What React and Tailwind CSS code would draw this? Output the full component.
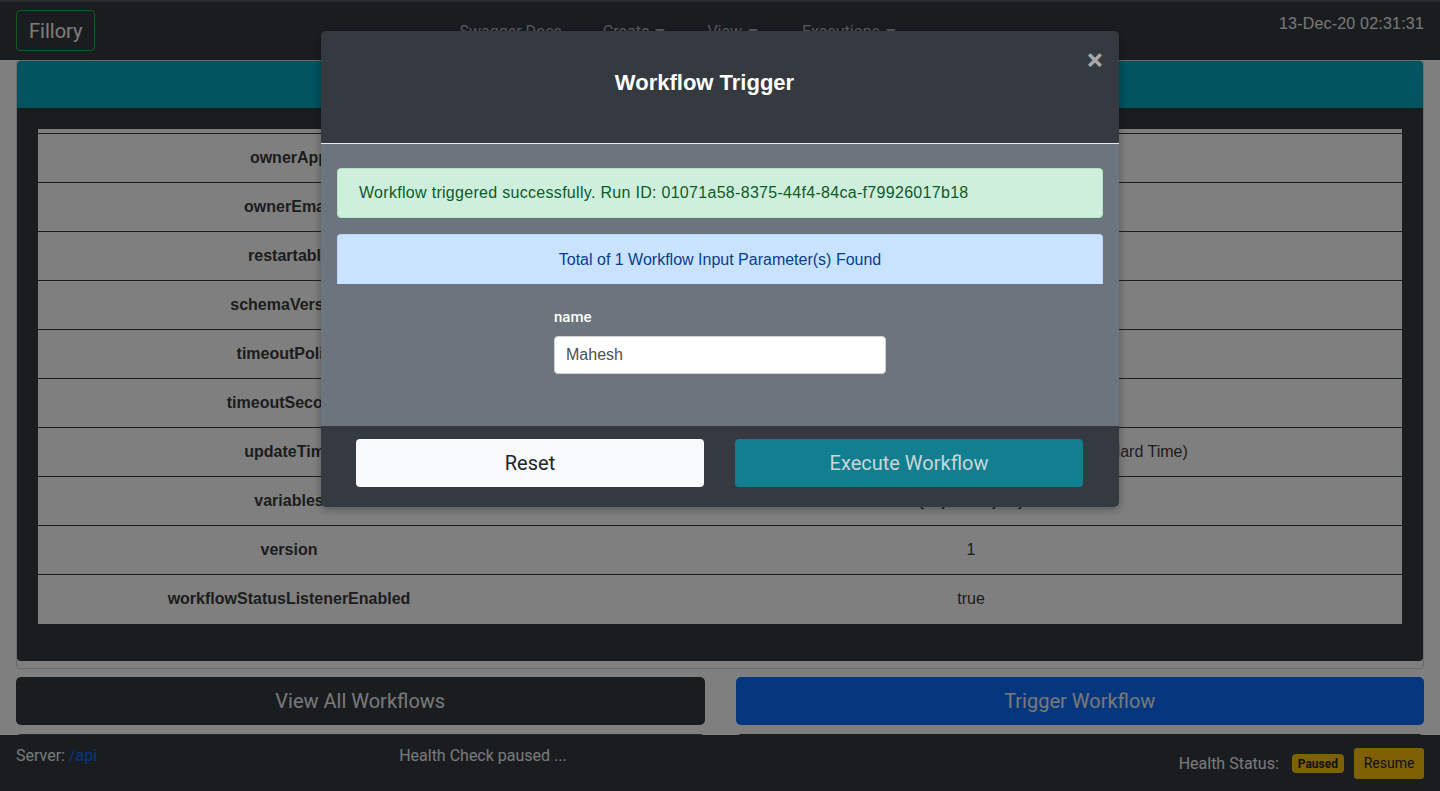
import React from "react";

const rows = [
  ["ownerApp", ""],
  ["ownerEmail", "example@email.com"],
  ["restartable", "true"],
  ["schemaVersion", "2"],
  ["timeoutPolicy", "ALERT_ONLY"],
  ["timeoutSeconds", "0"],
  ["updateTime", "Sun Dec 13 2020 02:30:12 GMT+0530 (India Standard Time)"],
  ["variables", "[object Object]"],
  ["version", "1"],
  ["workflowStatusListenerEnabled", "true"],
];

function Caret() {
  return (
    <svg width="10" height="6" viewBox="0 0 10 6" className="ml-[6px] inline-block">
      <path d="M0 0 L10 0 L5 6 Z" fill="currentColor" />
    </svg>
  );
}

const roboto = { fontFamily: "Roboto, 'Liberation Sans', Arial, sans-serif" };

export default function App() {
  return (
    <div
      className="relative min-h-screen bg-white"
      style={{ fontFamily: "'Liberation Sans', Arial, sans-serif" }}
    >
      {/* Navbar */}
      <nav className="h-[60px] bg-[#343a40] border-t-2 border-[#555] flex items-start px-4">
        <div
          className="mt-[8px] h-[41px] px-[12px] flex items-center border border-[#1fb83c] rounded-[4px] text-[20px] text-[#f8f9fa]"
          style={roboto}
        >
          Fillory
        </div>
        <div className="ml-[364px] mt-[18px] flex items-center text-[16px] text-[#b4b4b4]" style={roboto}>
          <span className="mr-[41px]">Swagger Docs</span>
          <span className="mr-[42px] flex items-center">Create<Caret /></span>
          <span className="mr-[44px] flex items-center">View<Caret /></span>
          <span className="flex items-center">Executions<Caret /></span>
        </div>
        <div className="ml-auto mt-[10px] text-[16px] tracking-[0.2px] text-[#eeeeee]">13-Dec-20 02:31:31</div>
      </nav>

      {/* Main content */}
      <main className="px-4">
        <div className="border border-[#d6d6d6] rounded-[4px] pb-[7px]">
          <div className="h-[47px] bg-[#00a6be] rounded-t-[4px]" />
          <div className="bg-[#343a40] rounded-b-[4px] pt-[21px] pb-[37px] px-[21px]">
            <div className="bg-white pt-[4px]">
              <table className="w-full border-collapse text-[16px] text-[#3a3a3a]">
                <tbody>
                  {rows.map(([k, v]) => (
                    <tr key={k} className="border-t border-[#3a3a3a] h-[49px]">
                      <td className="w-[502px] text-center font-bold">{k}</td>
                      <td className="text-center">{v}</td>
                    </tr>
                  ))}
                </tbody>
              </table>
            </div>
          </div>
        </div>

        <div className="mt-[8px] grid grid-cols-2 gap-[31px]" style={roboto}>
          <button className="h-[48px] rounded-[5px] bg-[#343a40] text-[20px] text-[#f0f0f0]">
            View All Workflows
          </button>
          <button className="h-[48px] rounded-[5px] bg-[#0d6efd] text-[20px] text-[#f0f0f0]">
            Trigger Workflow
          </button>
        </div>
        <div className="mt-[9px] grid grid-cols-2 gap-[31px]">
          <div className="h-[48px] rounded-[5px] bg-[#4d545b]" />
          <div className="h-[48px] rounded-[5px] border border-[#343a40] bg-white" />
        </div>
      </main>

      {/* Fixed footer */}
      <footer
        className="fixed bottom-0 left-0 right-0 h-[56px] bg-[#343a40] flex items-start px-4 text-[16px] text-[#f2f2f2]"
        style={roboto}
      >
        <div className="mt-[9px]">
          Server: <span className="text-[#0d6efd]">/api</span>
        </div>
        <div className="ml-[302px] mt-[9px]">Health Check paused ...</div>
        <div className="ml-auto mt-[13px] flex items-center">
          <span>Health Status:</span>
          <span className="ml-[13px] px-[6px] h-[19px] flex items-center rounded-[4px] bg-[#ffc107] text-[12px] font-bold text-[#212529]">
            Paused
          </span>
          <span className="ml-[10px] h-[31px] w-[70px] flex items-center justify-center rounded-[3px] bg-[#ffc107] text-[14px] text-[#212529]">
            Resume
          </span>
        </div>
      </footer>

      {/* Backdrop */}
      <div className="fixed inset-0 bg-black/50" />

      {/* Modal */}
      <div className="fixed inset-0 flex justify-center items-start">
        <div className="mt-[31px] w-[798px] rounded-[5px] overflow-hidden shadow-[0_2px_8px_rgba(0,0,0,0.35)]">
          <div className="relative h-[113px] bg-[#343a40] border-b border-[#e9ecef] flex items-center justify-center pb-[10px] pr-[31px]">
            <h2 className="text-[22px] font-bold text-white">Workflow Trigger</h2>
            <span
              className="absolute right-[16px] top-[14px] text-[30px] leading-none font-bold text-[#a7a9ab]"
              style={roboto}
            >
              ×
            </span>
          </div>
          <div className="bg-[#6c757d] h-[282px] pt-[24px] px-[16px]">
            <div className="h-[50px] flex items-center px-[21px] rounded-[4px] bg-[#cdefdb] border border-[#b5e3c6] text-[16px] tracking-[0.3px] text-[#0f5a2c]">
              Workflow triggered successfully. Run ID: 01071a58-8375-44f4-84ca-f79926017b18
            </div>
            <div className="mt-[16px] h-[50px] flex items-center justify-center rounded-t-[4px] bg-[#c9e2fd] border border-[#b6d4fe] border-b-0 text-[16px] text-[#0a3d8f]">
              Total of 1 Workflow Input Parameter(s) Found
            </div>
            <div className="mx-auto w-[332px] mt-[22px]">
              <label className="block text-[15px] font-medium text-white" style={roboto}>name</label>
              <div className="mt-[7px] h-[38px] bg-white rounded-[4px] border border-[#ced4da] flex items-center px-[11px] text-[16px] text-[#495057]">
                Mahesh
              </div>
            </div>
          </div>
          <div className="bg-[#343a40] h-[81px] pt-[13px] pl-[35px] pr-[36px] flex gap-[31px]" style={roboto}>
            <button className="w-[348px] h-[48px] rounded-[4px] bg-[#f8f9fa] text-[20px] text-[#212529]">
              Reset
            </button>
            <button className="w-[348px] h-[48px] rounded-[4px] bg-[#117f8f] text-[20px] text-[#c9d6d8]">
              Execute Workflow
            </button>
          </div>
        </div>
      </div>
    </div>
  );
}
